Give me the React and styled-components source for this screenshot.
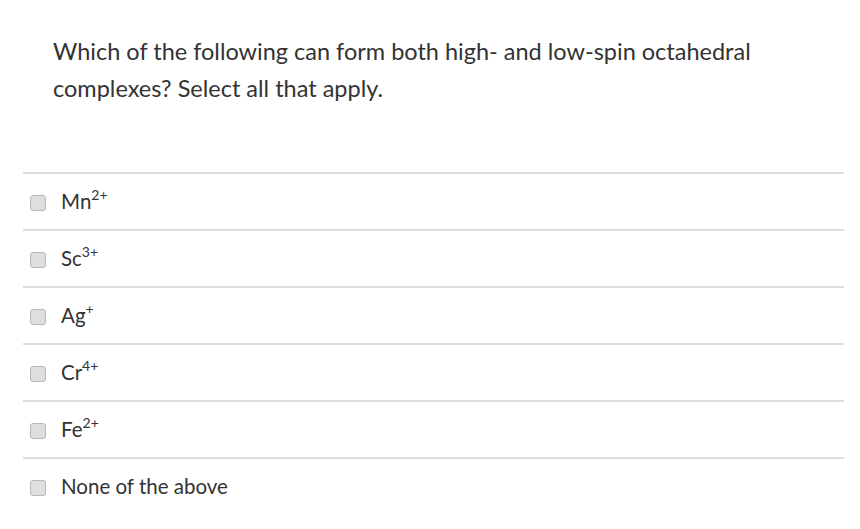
import React from "react";
import styled, { createGlobalStyle } from "styled-components";

const GlobalStyle = createGlobalStyle`
  html, body {
    margin: 0;
    padding: 0;
    background: #fff;
  }
  body {
    font-family: Lato, "Open Sans", sans-serif;
    color: #333;
  }
`;

const Page = styled.div`
  width: 860px;
  height: 529px;
  overflow: hidden;
  padding: 0 16px 0 23px;
  box-sizing: border-box;
`;

const Question = styled.p`
  margin: 0;
  padding: 33px 0 0 30px;
  font-size: 23.5px;
  line-height: 37px;
  width: 760px;
`;

const Options = styled.ul`
  list-style: none;
  margin: 65px 0 0;
  padding: 0;
`;

const Option = styled.li`
  display: flex;
  align-items: center;
  gap: 15px;
  height: 55px;
  border-top: 2px solid #dddddd;
  padding-left: 7px;
  font-size: 20.5px;
`;

const Box = styled.span`
  width: 14px;
  height: 14px;
  border: 1px solid #b8b8b8;
  border-radius: 3px;
  background: #dedede;
  flex-shrink: 0;
  margin-top: 3px;
`;

const Label = styled.span`
  line-height: 1;
  sup {
    font-size: 14px;
    vertical-align: 9px;
    line-height: 0;
  }
`;

const options = [
  ["Mn", "2+"],
  ["Sc", "3+"],
  ["Ag", "+"],
  ["Cr", "4+"],
  ["Fe", "2+"],
  ["None of the above", null],
];

export default function App() {
  return (
    <Page>
      <GlobalStyle />
      <Question>
        Which of the following can form both high- and low-spin octahedral
        complexes? Select all that apply.
      </Question>
      <Options>
        {options.map(([base, charge]) => (
          <Option key={base}>
            <Box />
            <Label>
              {base}
              {charge && <sup>{charge}</sup>}
            </Label>
          </Option>
        ))}
      </Options>
    </Page>
  );
}
